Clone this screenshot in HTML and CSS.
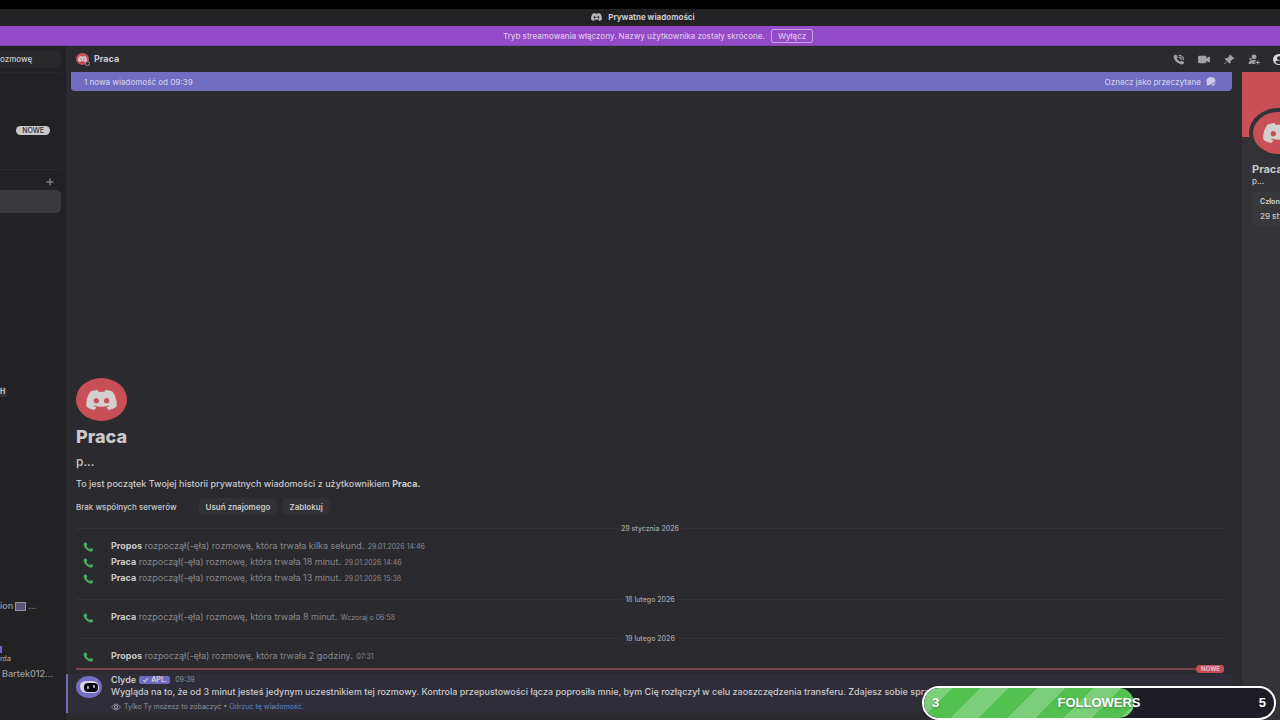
FILE: index.html
```html
<!DOCTYPE html>
<html lang="pl">
<head>
<meta charset="utf-8">
<meta name="viewport" content="width=device-width, initial-scale=1">
<title>Prywatne wiadomości</title>
<link rel="stylesheet" href="styles.css">
</head>
<body>
<svg class="defs" aria-hidden="true">
  <symbol id="logo" viewBox="0 0 32 24" preserveAspectRatio="none">
    <path d="M12 0C9 0 6.500 1 4.500 2.200C1.500 7 0 12.500 .2 19.500C2.500 22 5.500 23.500 8.800 24L10.700 20.800L8 19.300L8.800 18.600C13.500 20.700 18.500 20.700 23.200 18.600L24 19.300L21.300 20.800L23.200 24C26.500 23.500 29.500 22 31.800 19.500C32 12.500 30.500 7 27.500 2.200C25.500 1 23 0 20 0L19 2.200H13ZM10.700 9.500C12.300 9.500 13.500 11 13.500 12.800S12.300 16 10.700 16S7.900 14.600 7.900 12.800S9.100 9.500 10.700 9.500ZM21.300 9.500C22.900 9.500 24.100 11 24.100 12.800S22.900 16 21.300 16S18.500 14.600 18.500 12.800S19.700 9.500 21.300 9.500Z" fill="currentColor" fill-rule="evenodd"/>
  </symbol>
  <symbol id="phone" viewBox="0 0 24 24" preserveAspectRatio="none">
    <path d="M3 2.500C5.500.5 7.500 1.500 8.700 5C9.700 7.800 9 8.600 7.500 10C9 13 11.500 15 14.500 16.500C16 14.700 17 14.700 19.500 15.800C23 17.300 23.300 19 21 21.300C19 23.300 16.500 23.300 13 21.500C7.500 18.700 3.500 14 1.800 9C.8 6 1.200 4 3 2.500Z" fill="currentColor"/>
  </symbol>
</svg>

<div class="strip"></div>
<header class="titlebar">
  <svg class="titlebar-logo" aria-hidden="true"><use href="#logo"/></svg>
  <span>Prywatne wiadomości</span>
</header>
<div class="notice">
  <span>Tryb streamowania włączony. Nazwy użytkownika zostały skrócone.</span>
  <button class="notice-button" type="button">Wyłącz</button>
</div>

<div class="app">
  <nav class="sidebar" aria-label="Rozmowy">
    <button class="search" type="button">ozmowę</button>
    <div class="side-new"><span class="pill">NOWE</span></div>
    <div class="side-add"><button type="button" aria-label="Nowa wiadomość"><svg viewBox="0 0 8 8"><path d="M4 .5V7.500M.5 4H7.500" stroke="currentColor"/></svg></button></div>
    <a class="side-selected" href="#" aria-label="Praca"></a>
    <div class="side-tag"><span>H</span></div>
    <a class="side-item" href="#">ion <i class="box"></i> ...</a>
    <div class="side-user">
      <i class="user-mark"></i>
      <span class="user-small">rda</span>
      <span class="user-name">Bartek012...</span>
    </div>
  </nav>

  <div class="main">
    <header class="chat-header">
      <span class="mini-avatar"><svg aria-hidden="true"><use href="#logo"/></svg><i class="status"></i></span>
      <h2>Praca</h2>
      <div class="tools">
        <button type="button" aria-label="Połączenie głosowe"><svg viewBox="0 0 24 24" preserveAspectRatio="none"><use href="#phone" width="24" height="24"/><path d="M12 3C17 3 21 7 21 12M12 7.500C15 7.500 16.500 9 16.500 12" fill="none" stroke="currentColor" stroke-width="2.500" stroke-linecap="round"/></svg></button>
        <button type="button" aria-label="Połączenie wideo"><svg viewBox="0 0 24 24" preserveAspectRatio="none"><path d="M3 4H14Q17 4 17 7V9L22 6Q24 5.500 24 7V17Q24 18.500 22 18L17 15V17Q17 20 14 20H3Q0 20 0 17V7Q0 4 3 4Z" fill="currentColor"/></svg></button>
        <button type="button" aria-label="Przypięte"><svg viewBox="0 0 24 24" preserveAspectRatio="none"><path d="M14 1L23 10L21.500 11.500L19.500 11L15.500 15L15 19.500L13.500 21L8.500 16L2 23L1 22L8 15.500L3 10.500L4.500 9L9 8.500L13 4.500L12.500 2.500Z" fill="currentColor"/></svg></button>
        <button type="button" aria-label="Dodaj znajomych"><svg viewBox="0 0 24 24" preserveAspectRatio="none"><circle cx="12" cy="6" r="5" fill="currentColor"/><circle cx="5" cy="11" r="2.500" fill="currentColor"/><path d="M1 22Q1 15 6 14Q12 11 16 14V16H13V20H15V22H8L8.500 18L6 22Z" fill="currentColor"/><path d="M19.500 14V23M15 18.500H24" stroke="currentColor" stroke-width="2.200"/></svg></button>
        <button class="active" type="button" aria-label="Profil"><svg viewBox="0 0 24 24" preserveAspectRatio="none"><path d="M12 0A12 12 0 1 0 12 24A12 12 0 1 0 12 0ZM12 5A4 4 0 1 1 12 13A4 4 0 1 1 12 5ZM4 17Q12 11 20 17Q17 22 12 22T4 17Z" fill="currentColor" fill-rule="evenodd"/></svg></button>
      </div>
    </header>

    <div class="columns">
      <main class="chat">
        <div class="unread">
          <span>1 nowa wiadomość od 09:39</span>
          <button type="button">Oznacz jako przeczytane
            <svg viewBox="0 0 24 22"><path d="M12 0C19 0 23 5 23 10.500L21 12L15 18L13 16L9 20H1Q0 19 2.500 17C-2 8 3 0 12 0Z" fill="currentColor"/><path d="M14 18L17 21L23 14" fill="none" stroke="currentColor" stroke-width="2.500"/></svg>
          </button>
        </div>

        <section class="intro">
          <span class="avatar"><svg aria-hidden="true"><use href="#logo"/></svg></span>
          <h1>Praca</h1>
          <p class="handle">p...</p>
          <p class="about">To jest początek Twojej historii prywatnych wiadomości z użytkownikiem <b>Praca.</b></p>
          <div class="actions">
            <span>Brak wspólnych serwerów</span>
            <button type="button">Usuń znajomego</button>
            <button type="button">Zablokuj</button>
          </div>
        </section>

        <div class="date"><span>29 stycznia 2026</span></div>
        <div class="call"><svg aria-hidden="true"><use href="#phone"/></svg><p><b>Propos</b> rozpoczął(-ęła) rozmowę, która trwała kilka sekund. <time>29.01.2026 14:46</time></p></div>
        <div class="call"><svg aria-hidden="true"><use href="#phone"/></svg><p><b>Praca</b> rozpoczął(-ęła) rozmowę, która trwała 18 minut. <time>29.01.2026 14:46</time></p></div>
        <div class="call"><svg aria-hidden="true"><use href="#phone"/></svg><p><b>Praca</b> rozpoczął(-ęła) rozmowę, która trwała 13 minut. <time>29.01.2026 15:38</time></p></div>
        <div class="date"><span>18 lutego 2026</span></div>
        <div class="call"><svg aria-hidden="true"><use href="#phone"/></svg><p><b>Praca</b> rozpoczął(-ęła) rozmowę, która trwała 8 minut. <time>Wczoraj o 06:58</time></p></div>
        <div class="date"><span>19 lutego 2026</span></div>
        <div class="call"><svg aria-hidden="true"><use href="#phone"/></svg><p><b>Propos</b> rozpoczął(-ęła) rozmowę, która trwała 2 godziny. <time>07:31</time></p></div>
        <div class="new-line"><span>NOWE</span></div>

        <article class="message">
          <svg class="bot" viewBox="0 0 26 22" preserveAspectRatio="none" aria-hidden="true"><ellipse cx="13" cy="11" rx="13" ry="11" fill="#746dc4"/><path d="M4 10Q4 5 11 5H17Q23 6 23 12Q23 17 17 17H10Q4 16 4 10Z" fill="#d5d4df"/><rect x="8" y="7" width="14" height="9" rx="4" fill="#08080c"/><rect x="11" y="10" width="2" height="3" rx="1" fill="#bbb"/><rect x="17" y="9" width="2" height="3" rx="1" fill="#bbb"/></svg>
          <div class="body">
            <div class="author"><b>Clyde</b><span class="app-tag"><svg viewBox="0 0 8 8"><path d="M1 4L3 6.500L7 1.500" fill="none" stroke="currentColor" stroke-width="1.500"/></svg>APL.</span><time>09:39</time></div>
            <p class="text">Wygląda na to, że od 3 minut jesteś jedynym uczestnikiem tej rozmowy. Kontrola przepustowości łącza poprosiła mnie, bym Cię rozłączył w celu zaoszczędzenia transferu. Zdajesz sobie sprawę</p>
            <div class="note"><svg viewBox="0 0 18 14"><path d="M1 7Q9-4 17 7Q9 18 1 7Z" fill="none" stroke="currentColor" stroke-width="1.500"/><circle cx="9" cy="7" r="3" fill="none" stroke="currentColor" stroke-width="2"/></svg><span>Tylko Ty możesz to zobaczyć • <a href="#">Odrzuć tę wiadomość.</a></span></div>
          </div>
        </article>
      </main>

      <aside class="profile">
        <div class="banner"><span class="avatar ring"><svg aria-hidden="true"><use href="#logo"/></svg></span></div>
        <h3>Praca</h3>
        <p>p...</p>
        <div class="card"><b>Członek od</b><span>29 stycznia 2026</span></div>
      </aside>
    </div>
  </div>
</div>

<div class="goal">
  <div class="goal-fill"></div>
  <span>3</span><strong>FOLLOWERS</strong><span>5</span>
</div>
</body>
</html>
```
FILE: styles.css
```css
* { box-sizing: border-box; }
body {
  margin: 0;
  height: 100vh;
  display: flex;
  flex-direction: column;
  overflow: hidden;
  background: #2b2a2e;
  color: #c9c9cc;
  font: 500 9px/12px Inter, "Noto Sans", sans-serif;
  white-space: nowrap;
}
h1, h2, h3, p { margin: 0; }
button { margin: 0; padding: 0; border: 0; background: none; color: inherit; font: inherit; }
a { color: inherit; text-decoration: none; }
svg { display: block; flex: none; }
.defs { position: absolute; width: 0; height: 0; }

.strip { flex: none; height: 9px; background: #000; }
.titlebar {
  flex: none;
  height: 17px;
  display: flex;
  align-items: center;
  justify-content: center;
  gap: 6px;
  padding: 0 0 1px 6px;
  background: #222224;
  font-size: 8px;
  font-weight: 700;
}
.titlebar-logo { width: 11px; height: 8px; color: #b5b5b8; }
.notice {
  flex: none;
  height: 20px;
  display: flex;
  align-items: center;
  justify-content: center;
  gap: 6px;
  padding-left: 36px;
  background: #9449c6;
  border-bottom: 1px solid #7c45a6;
  color: #dcc4ea;
  font-size: 8px;
  font-weight: 500;
}
.notice-button { height: 14px; padding: 0 6px; border: 1px solid #c9a2e0; border-radius: 2px; line-height: 12px; }

.app { flex: 1; min-height: 0; display: flex; }
.sidebar { flex: none; width: 66px; display: flex; flex-direction: column; background: #222224; overflow: hidden; }
.search { flex: none; width: 61px; height: 18px; margin-top: 4px; border-radius: 0 4px 4px 0; background: #29292b; font-size: 8px; font-weight: 500; text-align: left; }
.side-new { width: 61px; margin-top: 4px; padding: 53px 11px 0 0; border-top: 1px solid #29292b; display: flex; justify-content: flex-end; }
.pill { height: 9px; padding: 0 6px; border-radius: 5px; background: #c8c8ca; color: #303033; font-size: 7px; line-height: 9px; }
.side-add { width: 61px; margin-top: 34px; padding: 8px 7px 0 0; border-top: 1px solid #2c2c2e; display: flex; justify-content: flex-end; color: #a0a0a3; }
.side-add svg { width: 8px; height: 8px; }
.side-selected { flex: none; width: 61px; height: 23px; margin-top: 4px; border-radius: 0 5px 5px 0; background: #3a3a3d; }
.side-tag { margin-top: 174px; font-size: 7px; line-height: 10px; font-weight: 700; }
.side-tag span { display: inline-block; padding-right: 2px; background: #343437; border-radius: 0 2px 2px 0; }
.side-item { display: flex; align-items: center; gap: 2px; margin-top: 203px; color: #98989b; }
.box { width: 11px; height: 9px; border: 1px solid #96919f; background: #5c5578; }
.side-user { display: flex; flex-direction: column; margin-top: 34px; }
.user-mark { width: 2px; height: 7px; background: #6f64cb; }
.user-small { font-size: 7px; color: #9d9da0; }
.user-name { margin-top: 2px; padding-left: 2px; line-height: 14px; color: #9d9da0; }

.main { flex: 1; min-width: 0; display: flex; flex-direction: column; }
.chat-header { flex: none; height: 26px; display: flex; align-items: center; gap: 5px; padding-left: 10px; overflow: hidden; }
.chat-header h2 { font-size: 9px; font-weight: 700; }
.mini-avatar { position: relative; width: 13px; height: 12px; display: grid; place-items: center; border-radius: 50%; background: #c94e5a; }
.mini-avatar svg { width: 9px; height: 6px; }
.status { position: absolute; right: -1px; bottom: -1px; width: 5px; height: 5px; border: 1px solid #96969a; border-radius: 50%; background: #2b2a2e; }
.tools { display: flex; gap: 13px; margin-left: auto; margin-right: -5px; color: #a2a2a5; }
.tools svg { width: 12px; height: 11px; }
.tools button { width: 12px; }
.tools .active { color: #d8d8da; }

.columns { flex: 1; min-height: 0; display: flex; }
.chat { flex: 1; min-width: 0; display: flex; flex-direction: column; padding-bottom: 7px; border-left: 1px solid #29292c; }
.unread {
  flex: none;
  height: 19px;
  margin: 0 10px auto 4px;
  padding: 0 16px 0 13px;
  display: flex;
  align-items: center;
  justify-content: space-between;
  border-radius: 0 0 4px 4px;
  background: #716bc2;
  color: #cdcae8;
  font-size: 8px;
  font-weight: 500;
}
.unread button { display: flex; align-items: center; gap: 5px; }
.unread svg { width: 10px; height: 9px; }

.intro { margin-left: 9px; }
.avatar { width: 51px; height: 43px; display: grid; place-items: center; border-radius: 50%; background: #c94f57; color: #d2cfcf; }
.avatar svg { width: 31px; height: 20px; }
h1 { margin-top: 5px; font-size: 18px; line-height: 22px; font-weight: 800; }
.handle { margin-top: 6px; font-size: 12px; line-height: 16px; }
.about { margin-top: 8px; }
.actions { display: flex; align-items: center; gap: 5px; margin-top: 8px; font-size: 8px; }
.actions span { margin-right: 17px; }
.actions button { height: 17px; padding: 0 7px; border-radius: 5px; background: #323236; font-weight: 600; }

.date { display: flex; align-items: center; gap: 4px; margin: 0 18px 0 9px; padding-top: 4px; height: 23px; color: #a3a3a7; font-size: 7px; font-weight: 500; }
.date::before, .date::after { content: ""; flex: 1; height: 1px; background: #343338; }
.call { display: flex; align-items: center; gap: 17px; padding-left: 16px; height: 16px; color: #88888d; font-weight: 400; }
.call svg { width: 11px; height: 10px; margin-top: 1px; color: #4ba966; }
.call b { color: #c9c9cc; font-weight: 700; }
.call time { margin-left: 1px; font-size: 7px; }
.new-line { display: flex; align-items: center; height: 10px; margin: 0 18px 0 9px; }
.new-line::before { content: ""; flex: 1; height: 2px; background: #78404a; }
.new-line span { height: 8px; padding: 0 4px 0 5px; border-radius: 4px 3px 3px 4px; background: #c44e5a; color: #e0c5ca; font-size: 6px; line-height: 8px; font-weight: 700; }
.message { display: flex; gap: 9px; margin: 0 10px 0 -1px; padding-left: 8px; border-left: 2px solid #7169bb; background: #2f2e38; overflow: hidden; }
.bot { width: 26px; height: 22px; margin-top: 2px; }
.author { display: flex; align-items: center; gap: 3px; }
.author b { font-weight: 600; }
.author time { margin-left: 2px; color: #919197; font-size: 7px; font-weight: 400; }
.app-tag { display: flex; align-items: center; gap: 2px; height: 8px; padding: 0 3px; border-radius: 2px; background: #7069c1; font-size: 7px; font-weight: 700; }
.app-tag svg { width: 7px; height: 6px; }
.note { display: flex; align-items: center; gap: 3px; margin-top: 3px; color: #919197; font-size: 7px; font-weight: 400; }
.note svg { width: 10px; height: 8px; }
.note a { color: #5b83cd; }

.profile { flex: none; width: 38px; overflow: hidden; background: #333337; }
.banner { position: relative; height: 65px; background: #c94f57; }
.ring { position: absolute; left: 7px; top: 36px; width: 59px; height: 50px; border: 4px solid #333337; }
.profile h3 { margin: 25px 0 0 10px; font-size: 11px; line-height: 14px; font-weight: 700; }
.profile p { margin-left: 10px; line-height: 10px; font-size: 8px; }
.card { display: flex; flex-direction: column; gap: 2px; width: 160px; margin: 6px 0 0 10px; padding: 4px 8px; border-radius: 5px; background: #38383b; font-size: 8px; }
.card b { font-size: 7px; }

.goal {
  position: absolute;
  right: 4px;
  bottom: 0;
  width: 354px;
  height: 34px;
  display: flex;
  align-items: center;
  justify-content: space-between;
  padding: 0 8px;
  border: 2px solid #fff;
  border-radius: 17px;
  background: #1e1d26;
  color: #fff;
  font: 700 13px/16px "Liberation Sans", sans-serif;
  overflow: hidden;
  text-shadow: 0 1px 2px #3337;
}
.goal span, .goal strong { position: relative; }
.goal-fill {
  position: absolute;
  inset: 0 auto 0 0;
  width: 60%;
  border-radius: 15px;
  background: repeating-linear-gradient(135deg, #7bcf78 0 20px, #52c150 20px 40px);
}
```
